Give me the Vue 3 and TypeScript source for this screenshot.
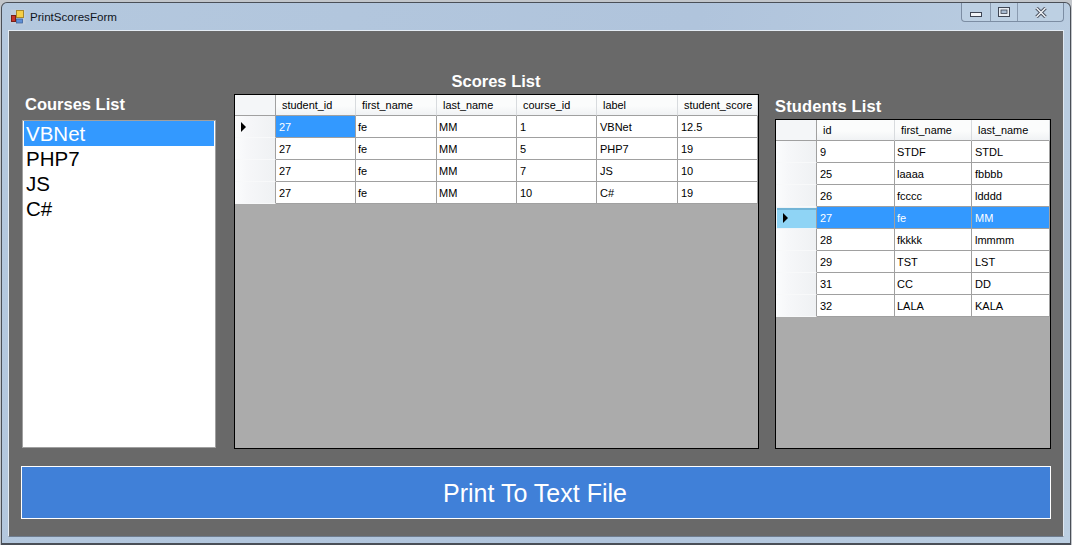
<script setup lang="ts">
interface GridDef {
  cols: number[];
  heads: string[];
  rows: string[][];
  selected: number;
}
const courses: string[] = ['VBNet', 'PHP7', 'JS', 'C#'];
const scores: GridDef = {
  cols: [41, 80, 81, 80, 80, 81, 80],
  heads: ['student_id', 'first_name', 'last_name', 'course_id', 'label', 'student_score'],
  rows: [
    ['27', 'fe', 'MM', '1', 'VBNet', '12.5'],
    ['27', 'fe', 'MM', '5', 'PHP7', '19'],
    ['27', 'fe', 'MM', '7', 'JS', '10'],
    ['27', 'fe', 'MM', '10', 'C#', '19'],
  ],
  selected: 0,
};
const students: GridDef = {
  cols: [41, 78, 77, 78],
  heads: ['id', 'first_name', 'last_name'],
  rows: [
    ['9', 'STDF', 'STDL'],
    ['25', 'laaaa', 'fbbbb'],
    ['26', 'fcccc', 'ldddd'],
    ['27', 'fe', 'MM'],
    ['28', 'fkkkk', 'lmmmm'],
    ['29', 'TST', 'LST'],
    ['31', 'CC', 'DD'],
    ['32', 'LALA', 'KALA'],
  ],
  selected: 3,
};
const grids = { scores, students };
const tpl = (g: GridDef) => ({ gridTemplateColumns: g.cols.map((c) => c + 'px').join(' ') });
</script>

<template>
  <div class="window">
    <header class="titlebar">
      <svg class="appicon" width="16" height="16" viewBox="0 0 16 16">
        <rect x="0.5" y="0.5" width="15" height="15" fill="#c9d2dc" opacity="0.55" />
        <rect x="1.5" y="6.5" width="4" height="6" fill="#c8352b" stroke="#7a2018" />
        <rect x="6.5" y="1.5" width="7" height="7" fill="#f6cf45" stroke="#a8872a" />
        <rect x="6.5" y="10" width="6" height="4" fill="#5f8fd6" stroke="#3e639c" stroke-width="0.8" />
      </svg>
      <span class="wintitle">PrintScoresForm</span>
      <div class="caption">
        <div class="capbtn min"><svg width="12" height="5" viewBox="0 0 12 5"><rect x="0.5" y="0.5" width="11" height="4" fill="#f2f5f9" stroke="#3f4654" /></svg></div>
        <div class="capbtn max"><svg width="12" height="10" viewBox="0 0 12 10"><rect x="0.5" y="0.5" width="11" height="9" fill="#e8edf3" stroke="#3f4654" /><rect x="3" y="3" width="6" height="3.5" fill="#a9bcd2" stroke="#3f4654" stroke-width="0.8" /></svg></div>
        <div class="capbtn close"><svg width="12" height="11" viewBox="0 0 12 11"><path d="M1.5 1 L10.5 10 M10.5 1 L1.5 10" stroke="#454c5a" stroke-width="3.4" /><path d="M1.5 1 L10.5 10 M10.5 1 L1.5 10" stroke="#eef1f5" stroke-width="1.6" /></svg></div>
      </div>
    </header>

    <main class="client">
      <div class="panels">
        <section class="panel courses">
          <h2 class="ptitle">Courses List</h2>
          <ul class="listbox">
            <li v-for="(c, i) in courses" :key="c" :class="{ sel: i === 0 }">{{ c }}</li>
          </ul>
        </section>

        <section class="panel scores">
          <h2 class="ptitle center">Scores List</h2>
          <div class="grid">
            <div class="row head" :style="tpl(grids.scores)">
              <div class="corner"></div>
              <div v-for="h in grids.scores.heads" :key="h" class="hcell">{{ h }}</div>
            </div>
            <div v-for="(r, ri) in grids.scores.rows" :key="ri" class="row" :style="tpl(grids.scores)">
              <div class="rowhead"><span v-if="ri === grids.scores.selected" class="arrow"></span></div>
              <div v-for="(v, ci) in r" :key="ci" class="cell" :class="{ hot: ri === 0 && ci === 0 }">{{ v }}</div>
            </div>
          </div>
        </section>

        <section class="panel students">
          <h2 class="ptitle">Students List</h2>
          <div class="grid">
            <div class="row head" :style="tpl(grids.students)">
              <div class="corner"></div>
              <div v-for="h in grids.students.heads" :key="h" class="hcell">{{ h }}</div>
            </div>
            <div v-for="(r, ri) in grids.students.rows" :key="ri" class="row" :style="tpl(grids.students)">
              <div class="rowhead" :class="{ current: ri === grids.students.selected }"><span v-if="ri === grids.students.selected" class="arrow"></span></div>
              <div v-for="(v, ci) in r" :key="ci" class="cell" :class="{ hot: ri === grids.students.selected }">{{ v }}</div>
            </div>
          </div>
        </section>
      </div>

      <button class="print">Print To Text File</button>
    </main>
  </div>
</template>

<style>
html, body { margin: 0; padding: 0; background: #c2c6cb; }
</style>

<style scoped>
.window {
  width: 1070px;
  height: 543px;
  margin: 2px 1px 0;
  box-sizing: border-box;
  border: 1px solid #4a4f57;
  border-bottom-width: 2px;
  border-radius: 6px 6px 0 0;
  background: linear-gradient(100deg, #b4c8de 0%, #b0c4dc 60%, #bccfe2 100%);
  padding: 0 6px 6px 6px;
  display: flex;
  flex-direction: column;
  font-family: "Liberation Sans", Arial, sans-serif;
}
.titlebar {
  height: 27px;
  flex: none;
  display: flex;
  align-items: center;
  padding-left: 2px;
  position: relative;
}
.appicon { margin-top: 1px; }
.wintitle {
  margin-left: 4px;
  font-size: 11.6px;
  color: #10141c;
}
.caption {
  position: absolute;
  top: 0;
  right: 0;
  display: flex;
  height: 18px;
  border: 1px solid #7c8da3;
  border-top: none;
  border-radius: 0 0 4px 4px;
  background: #bdd0e3;
}
.capbtn {
  display: flex;
  align-items: center;
  justify-content: center;
  height: 18px;
}
.capbtn + .capbtn { border-left: 1px solid #8a9bb0; }
.min { width: 28px; }
.min svg { margin-top: 5px; }
.max { width: 26px; }
.close { width: 45px; }
.client {
  flex: 1;
  background: #696969;
  border: 1px solid #e4ecf4;
  border-right-color: #dfe8f1;
  border-bottom-color: #6f7d8f;
  box-sizing: border-box;
  padding: 0 12px 17px 12px;
  display: flex;
  flex-direction: column;
  justify-content: flex-end;
}
.panels {
  display: flex;
  align-items: flex-end;
}
.panel { display: flex; flex-direction: column; }
.courses { width: 194px; margin-right: 18px; margin-left: 1px; }
.scores { width: 525px; margin-right: 16px; }
.students { width: 276px; }
.ptitle {
  margin: 0;
  font-size: 16.5px;
  line-height: 19px;
  font-weight: 700;
  color: #fff;
  padding-bottom: 4px;
}
.courses .ptitle { padding-left: 3px; padding-bottom: 6px; }
.students .ptitle { padding-bottom: 3px; letter-spacing: 0.15px; }
.ptitle.center { text-align: center; margin-left: -1px; padding-bottom: 3px; }
.listbox {
  list-style: none;
  margin: 0 0 1px;
  padding: 0 1px;
  height: 328px;
  box-sizing: border-box;
  background: #fff;
  border: 1px solid #a0a0a0;
  font-size: 20.5px;
  line-height: 25px;
  color: #000;
}
.listbox li { padding-left: 2px; height: 25px; }
.listbox li.sel { background: #3399ff; color: #fff; }
.grid {
  background: #ababab;
  border: 1px solid #000;
  box-sizing: border-box;
}
.scores .grid { height: 355px; }
.students .grid { height: 330px; }
.row {
  display: grid;
  height: 22px;
  font-size: 11px;
  color: #000;
}
.row.head { height: 21px; }
.corner, .hcell {
  background: linear-gradient(#fbfcfc 0 55%, #f0f2f4 100%);
  border-right: 1px solid #d8dbde;
  border-bottom: 1px solid #a0a0a0;
  box-sizing: border-box;
}
.corner { background: #f4f6f8; border-right-color: #a0a0a0; }
.hcell {
  line-height: 20px;
  padding-left: 6px;
  font-size: 10.9px;
  white-space: nowrap;
  overflow: hidden;
}
.rowhead {
  background: linear-gradient(90deg, #fbfcfd 0%, #f6f7f9 30%, #eff1f3 100%);
  border-right: 1px solid #a0a0a0;
  border-bottom: 1px solid #f8f9fa;
  box-sizing: border-box;
  display: flex;
  align-items: center;
  padding-left: 6px;
}
.rowhead.current {
  background: linear-gradient(#72b4d6 0 2px, #8fd4f5 2px 100%);
  border: 1px solid #eef4f8;
  border-right-color: #a0a0a0;
}
.arrow {
  width: 0;
  height: 0;
  border-left: 5px solid #000;
  border-top: 5px solid transparent;
  border-bottom: 5px solid transparent;
}
.cell {
  background: #fff;
  border-right: 1px solid #a0a0a0;
  border-bottom: 1px solid #a0a0a0;
  box-sizing: border-box;
  line-height: 22px;
  padding-left: 2px;
  white-space: nowrap;
  overflow: hidden;
}
.row .cell:nth-child(2),
.scores .row .cell:nth-child(n+5),
.students .row .cell:last-child { padding-left: 3px; }
.cell.hot { background: #3399ff; color: #fff; }
.print {
  display: block;
  margin: 17px 0 0 0;
  height: 53px;
  width: 1030px;
  box-sizing: border-box;
  background: #4080d8;
  border: 1px solid #fff;
  color: #fff;
  font-family: "Liberation Sans", Arial, sans-serif;
  font-size: 25px;
  padding: 2px 2px 0 0;
}
</style>
